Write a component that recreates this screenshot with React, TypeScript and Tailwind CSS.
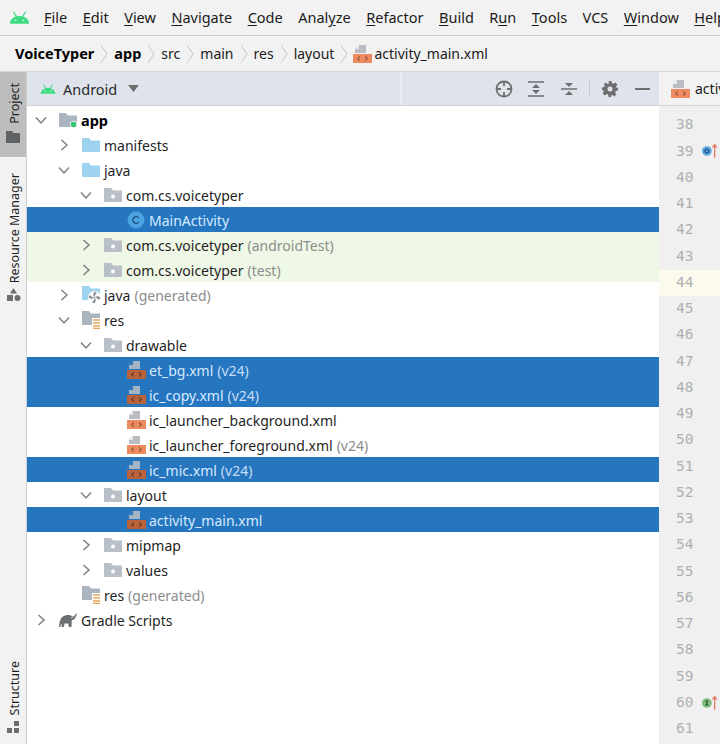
import type { ReactNode } from "react";

const menus: [string, string, string][] = [
  ["", "F", "ile"],
  ["", "E", "dit"],
  ["", "V", "iew"],
  ["", "N", "avigate"],
  ["", "C", "ode"],
  ["Anal", "y", "ze"],
  ["", "R", "efactor"],
  ["", "B", "uild"],
  ["R", "u", "n"],
  ["", "T", "ools"],
  ["VCS", "", ""],
  ["", "W", "indow"],
  ["", "H", "elp"],
];

const crumbs = [
  { label: "VoiceTyper", bold: true },
  { label: "app", bold: true },
  { label: "src" },
  { label: "main" },
  { label: "res" },
  { label: "layout" },
];

type IconName = "module" | "blue" | "pkg" | "class" | "gen" | "res" | "xml" | "gradle";

type Row = {
  level: number;
  chevron?: "right" | "down";
  icon: IconName;
  label: string;
  hint?: string;
  bold?: boolean;
  selected?: boolean;
  test?: boolean;
};

const rows: Row[] = [
  { level: 0, chevron: "down", icon: "module", label: "app", bold: true },
  { level: 1, chevron: "right", icon: "blue", label: "manifests" },
  { level: 1, chevron: "down", icon: "blue", label: "java" },
  { level: 2, chevron: "down", icon: "pkg", label: "com.cs.voicetyper" },
  { level: 3, icon: "class", label: "MainActivity", selected: true },
  { level: 2, chevron: "right", icon: "pkg", label: "com.cs.voicetyper", hint: "(androidTest)", test: true },
  { level: 2, chevron: "right", icon: "pkg", label: "com.cs.voicetyper", hint: "(test)", test: true },
  { level: 1, chevron: "right", icon: "gen", label: "java", hint: "(generated)" },
  { level: 1, chevron: "down", icon: "res", label: "res" },
  { level: 2, chevron: "down", icon: "pkg", label: "drawable" },
  { level: 3, icon: "xml", label: "et_bg.xml", hint: "(v24)", selected: true },
  { level: 3, icon: "xml", label: "ic_copy.xml", hint: "(v24)", selected: true },
  { level: 3, icon: "xml", label: "ic_launcher_background.xml" },
  { level: 3, icon: "xml", label: "ic_launcher_foreground.xml", hint: "(v24)" },
  { level: 3, icon: "xml", label: "ic_mic.xml", hint: "(v24)", selected: true },
  { level: 2, chevron: "down", icon: "pkg", label: "layout" },
  { level: 3, icon: "xml", label: "activity_main.xml", selected: true },
  { level: 2, chevron: "right", icon: "pkg", label: "mipmap" },
  { level: 2, chevron: "right", icon: "pkg", label: "values" },
  { level: 1, icon: "res", label: "res", hint: "(generated)" },
  { level: 0, chevron: "right", icon: "gradle", label: "Gradle Scripts" },
];

const indents = ["pl-[6px]", "pl-[29px]", "pl-[51px]", "pl-[74px]"];
const lineNumbers = Array.from({ length: 24 }, (_, i) => 38 + i);

function AndroidHead({ className }: { className: string }) {
  return (
    <svg viewBox="0 0 22 13" className={className}>
      <path d="M1 13c.3-4.600 4-8 10-8s9.700 3.400 10 8z" fill="#3ddc84" />
      <path d="M5 1l3 5M17 1l-3 5" stroke="#3ddc84" strokeWidth="1.400" strokeLinecap="round" />
      <circle cx="7" cy="9.500" r="1" fill="#c9f3da" />
      <circle cx="15" cy="9.500" r="1" fill="#c9f3da" />
    </svg>
  );
}

function Folder({ color, children }: { color: string; children?: ReactNode }) {
  return (
    <svg viewBox="0 0 18 16" className="w-[18px] h-[16px]">
      <path d="M0 1h7l2 2.500h9V15H0z" fill={color} />
      {children}
    </svg>
  );
}

function XmlIcon({ selected, size = "w-[19px] h-[19px]" }: { selected?: boolean; size?: string }) {
  return (
    <svg viewBox="0 0 19 19" className={size}>
      <path d="M6 1h7v8H2V5z" fill={selected ? "#a3b3c4" : "#b9bdc3"} />
      <path d="M6 1v4H2z" fill={selected ? "#2675bf" : "#e8e9eb"} />
      <rect x="0" y="10" width="19" height="9" fill={selected ? "#b9623c" : "#ee8a5f"} />
      <path d="M7 12.500l-2.500 2 2.500 2M12 12.500l2.500 2-2.500 2" stroke={selected ? "#3a2a20" : "#70402a"} strokeWidth="1" fill="none" />
    </svg>
  );
}

function TreeIcon({ name, selected }: { name: IconName; selected?: boolean }) {
  if (name === "module")
    return (
      <Folder color="#aab5bf">
        <circle cx="14.500" cy="12.500" r="3.500" fill="#fff" />
        <circle cx="14.500" cy="12.500" r="2.800" fill="#34c76f" />
      </Folder>
    );
  if (name === "blue") return <Folder color="#9ed3ef" />;
  if (name === "pkg")
    return (
      <Folder color="#b8bfc6">
        <circle cx="9" cy="9.500" r="2" fill="#fff" />
      </Folder>
    );
  if (name === "class")
    return (
      <svg viewBox="0 0 18 18" className="w-[18px] h-[18px]">
        <circle cx="9" cy="9" r="8.500" fill={selected ? "#4aa3e0" : "#9ed3ef"} />
        <path d="M11.800 6.800a3.400 3.400 0 1 0 0 4.400" stroke="#1f4f7d" strokeWidth="1.300" fill="none" />
      </svg>
    );
  if (name === "gen")
    return (
      <svg viewBox="0 0 19 19" className="w-[19px] h-[19px]">
        <path d="M0 1h7l2 2.500h9V15H0z" fill="#9ed3ef" />
        <circle cx="12.500" cy="12.500" r="6.500" fill="#fff" />
        <path
          d="M12.500 12.500C10.500 10 11 8 13 6.500l2 1.500c-1.500 1-2.300 2.500-2.500 4.500zM12.500 12.500c2.500-2 4.500-1.500 6 .5l-1.500 2c-1-1.500-2.500-2.300-4.500-2.500zM12.500 12.500c2 2.500 1.500 4.500-.5 6l-2-1.500c1.500-1 2.300-2.500 2.500-4.500zM12.500 12.500c-2.500 2-4.500 1.500-6-.5l1.500-2c1 1.500 2.500 2.300 4.500 2.500z"
          fill="#8a9095"
        />
      </svg>
    );
  if (name === "res")
    return (
      <svg viewBox="0 0 19 19" className="w-[19px] h-[19px]">
        <path d="M0 1h7l2 2.500h9V15H0z" fill="#aab5bf" />
        <rect x="10" y="8" width="9" height="11" fill="#fff" />
        <path d="M11 10h7M11 13h7M11 16h7M11 18.500h7" stroke="#e5a65a" strokeWidth="1.400" />
      </svg>
    );
  if (name === "xml") return <XmlIcon selected={selected} />;
  return (
    <svg viewBox="0 0 18 14" className="w-[18px] h-[14px]">
      <path
        d="M0 14C.3 9 1.500 5 4 3.500 7 1.800 11 1.500 13 3c1.200.9 2 .6 2.600-.4.400-.7 1-1.600 2.400-2.100v1.300c-.8.4-1 1.200-1.400 2.200-.6 2-2.100 3.300-3.800 3L12.500 14H9.800l-.5-3.500H5.500L5 14H2.600v-3.500c-.8 1-1.200 2.200-1.400 3.500z"
        fill="#6b6f72"
      />
      <circle cx="13" cy="4.500" r=".7" fill="#fff" />
    </svg>
  );
}

function Chevron({ dir }: { dir: "right" | "down" }) {
  return (
    <svg viewBox="0 0 16 16" className="w-[16px] h-[16px]">
      <path
        d={dir === "right" ? "M5.500 3l5.500 5-5.500 5" : "M3 5.500l5 5.500 5-5.500"}
        fill="none"
        stroke="#7d8286"
        strokeWidth="1.500"
      />
    </svg>
  );
}

function CrumbArrow() {
  return (
    <svg viewBox="0 0 8 20" className="w-[8px] h-[20px] mx-[6px] shrink-0">
      <path d="M1 1l6 9-6 9" fill="none" stroke="#c6c6c6" strokeWidth="1" />
    </svg>
  );
}

function VerticalLabel({ children }: { children: ReactNode }) {
  return <span className="[writing-mode:vertical-rl] rotate-180 text-[12.500px] leading-none text-[#1f1f1f] pr-[5px]">{children}</span>;
}

function GutterMark({ kind }: { kind: "o" | "i" }) {
  return (
    <svg viewBox="0 0 18 16" className="w-[18px] h-[16px]">
      <circle cx="5" cy="8" r="5" fill={kind === "o" ? "#5aa7dc" : "#7fbe7f"} />
      {kind === "o" ? (
        <circle cx="5" cy="8" r="2" fill="none" stroke="#1e4f86" strokeWidth="1.200" />
      ) : (
        <path d="M3.500 6h3M5 6v4M3.500 10h3" stroke="#22401f" strokeWidth="1" />
      )}
      <path d="M13 15V2M10.800 4.500L13 1.500l2.200 3" fill="none" stroke="#e07a5f" strokeWidth="1.300" />
    </svg>
  );
}

export default function App() {
  return (
    <div className="w-[720px] h-[744px] overflow-hidden flex flex-col bg-white text-[#1a1a1a] font-['Noto_Sans',sans-serif]">
      <div className="h-[36px] shrink-0 flex items-center bg-[#f2f2f2] border-b border-[#cfcfcf] pl-[9px] text-[14.500px] whitespace-nowrap">
        <AndroidHead className="w-[21px] h-[13px] mr-[14px] shrink-0" />
        <div className="flex gap-[15.500px]">
          {menus.map(([a, u, b]) => (
            <span key={a + u + b}>
              {a}
              <span className="underline underline-offset-2">{u}</span>
              {b}
            </span>
          ))}
        </div>
      </div>

      <div className="h-[36px] shrink-0 flex items-center bg-[#f2f2f2] border-b border-[#d5d5d5] pl-[15px] text-[14px] whitespace-nowrap">
        {crumbs.map((c) => (
          <div key={c.label} className="flex items-center">
            <span className={c.bold ? "font-bold text-black text-[14.500px]" : ""}>{c.label}</span>
            <CrumbArrow />
          </div>
        ))}
        <XmlIcon size="w-[19px] h-[19px] mr-[2px] -ml-px" />
        <span>activity_main.xml</span>
      </div>

      <div className="flex-1 flex min-h-0">
        <div className="w-[27px] shrink-0 flex flex-col items-center bg-[#f2f2f2] border-r border-[#d0d0d0]">
          <div className="w-full h-[85px] flex flex-col items-center pt-[11px] bg-[#bdbdbd]">
            <VerticalLabel>Project</VerticalLabel>
            <svg viewBox="0 0 14 12" className="w-[14px] h-[12px] mt-[7px]">
              <path d="M0 0h6l1.500 2H14v10H0z" fill="#5f6366" />
            </svg>
          </div>
          <div className="flex flex-col items-center pt-[16px]">
            <VerticalLabel>Resource Manager</VerticalLabel>
            <svg viewBox="0 0 15 13" className="w-[15px] h-[13px] mt-[5px]">
              <path d="M7.500 0l3.500 5.500H4z" fill="#6b6f72" />
              <rect x="1" y="7" width="6" height="6" fill="#6b6f72" />
              <circle cx="11.500" cy="10" r="3" fill="#6b6f72" />
            </svg>
          </div>
          <div className="flex-1" />
          <div className="flex flex-col items-center pb-[11px]">
            <VerticalLabel>Structure</VerticalLabel>
            <svg viewBox="0 0 13 12" className="w-[13px] h-[12px] mt-[6px]">
              <path d="M7 0h5v5H7zM0 7h5v5H0zM7 7h5v5H7z" fill="#6b6f72" />
            </svg>
          </div>
        </div>

        <div className="w-[632px] shrink-0 flex flex-col">
          <div className="h-[34px] shrink-0 flex items-center bg-[#dfe3ec] border-b border-[#cfd2d8]">
            <div className="w-[375px] h-full shrink-0 flex items-center border-r-2 border-[#e9ecf2] pl-[13px]">
              <AndroidHead className="w-[16px] h-[10px] mr-[7px] shrink-0" />
              <span className="text-[14.500px] text-[#2a2a2a] pt-[2px]">Android</span>
              <svg viewBox="0 0 11 7" className="w-[11px] h-[7px] ml-[11px]">
                <path d="M0 0h11L5.500 7z" fill="#6e6e6e" />
              </svg>
            </div>
            <div className="flex-1 flex items-center justify-end pr-[9px]">
              <svg viewBox="0 0 18 18" className="w-[18px] h-[18px]">
                <circle cx="9" cy="9" r="7.500" fill="none" stroke="#6e6e6e" strokeWidth="1.800" />
                <path d="M9 1.500v4.500M9 12v4.500M1.500 9H6M12 9h4.500" stroke="#6e6e6e" strokeWidth="1.800" />
              </svg>
              <svg viewBox="0 0 16 16" className="w-[16px] h-[16px] ml-[15px]">
                <path d="M0 1h16M0 15h16" stroke="#6e6e6e" strokeWidth="1.500" />
                <path d="M8 3l4 4H4zM8 13l4-4H4z" fill="#6e6e6e" />
              </svg>
              <svg viewBox="0 0 16 16" className="w-[16px] h-[16px] ml-[17px]">
                <path d="M0 8h16" stroke="#6e6e6e" strokeWidth="1.500" />
                <path d="M8 6L4 2h8zM8 10l4 4H4z" fill="#6e6e6e" />
              </svg>
              <div className="w-px h-[17px] bg-[#c8ccd4] ml-[12px]" />
              <svg viewBox="0 0 16 16" className="w-[16px] h-[16px] ml-[12px]">
                <path
                  d="M6.500 0h3l.4 2.200 1.500.6L13.300 1.500l2.100 2.100-1.300 1.900.6 1.500L16 6.500v3l-2.300.4-.6 1.500 1.300 1.900-2.100 2.100-1.900-1.300-1.500.6L9.500 16h-3l-.4-2.300-1.500-.6-1.900 1.300-2.100-2.100 1.300-1.900-.6-1.500L0 9.500v-3l2.300-.4.600-1.500L1.600 3.700l2.100-2.100 1.900 1.300 1.500-.6zM8 5.500a2.500 2.500 0 1 0 0 5 2.500 2.500 0 0 0 0-5z"
                  fill="#6e6e6e"
                  fillRule="evenodd"
                />
              </svg>
              <div className="w-[15px] h-[2px] bg-[#6e6e6e] ml-[17px]" />
            </div>
          </div>

          <div className="flex-1 pt-[1px] text-[14px] whitespace-nowrap">
            {rows.map((r, i) => (
              <div
                key={i}
                className={`h-[25px] flex items-center ${indents[r.level]} ${
                  r.selected ? "bg-[#2675bf]" : r.test ? "bg-[#eff8e6]" : ""
                }`}
              >
                <div className="w-[16px] flex justify-center shrink-0">{r.chevron && <Chevron dir={r.chevron} />}</div>
                <div className="w-[22px] ml-[10px] flex items-center shrink-0">
                  <TreeIcon name={r.icon} selected={r.selected} />
                </div>
                <span className={`pt-[2px] ${r.selected ? "text-[#d5eaff]" : r.bold ? "font-bold text-black text-[14.500px]" : "text-[#1f1f1f]"}`}>
                  {r.label}
                </span>
                {r.hint && <span className={`pt-[2px] ml-[4px] ${r.selected ? "text-[#c5def6]" : "text-[#8c8c8c]"}`}>{r.hint}</span>}
              </div>
            ))}
          </div>
        </div>

        <div className="flex-1 flex flex-col min-w-0 bg-white">
          <div className="h-[34px] shrink-0 flex items-center bg-[#f2f2f2] border-b border-[#d5d5d5] pl-[12px] overflow-hidden text-[14px] whitespace-nowrap">
            <XmlIcon size="w-[19px] h-[19px] mr-[5px] shrink-0" />
            <span>activity_main.xml</span>
          </div>
          <div className="flex-1 bg-[#f0f0f0] pt-[6px] font-['DejaVu_Sans_Mono',monospace] text-[14.500px] text-[#adb0b2]">
            {lineNumbers.map((n) => (
              <div key={n} className={`h-[26.260px] flex items-center pl-[17px] gap-[9px] ${n === 44 ? "bg-[#fcfaed]" : ""}`}>
                <span>{n}</span>
                {n === 39 && <GutterMark kind="o" />}
                {n === 60 && <GutterMark kind="i" />}
              </div>
            ))}
          </div>
        </div>
      </div>
    </div>
  );
}
